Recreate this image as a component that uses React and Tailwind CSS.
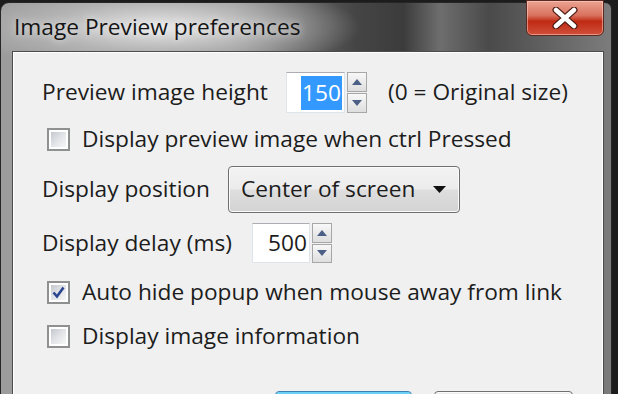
import React from 'react';

const font = { fontFamily: '"Open Sans", "Noto Sans", sans-serif' };

const Arrow = ({up}) => (
    <svg width="10" height="6" viewBox="0 0 10 6">
        {up
            ? <path d="M0 6 L5 0 L10 6 Z" fill="#4c5f86"/>
            : <path d="M0 0 L5 6 L10 0 Z" fill="#4c5f86"/>}
    </svg>
);

const SpinBox = ({value, selected, inputW, h}) => (
    <div className="flex items-stretch gap-[2px]" style={{height: h}}>
        <div
            className="bg-white border border-[#dfe3ea] border-t-[#abadb3] flex items-center justify-end pr-[2px]"
            style={{width: inputW}}>
            {selected
                ? <span className="bg-[#3399ff] text-white px-[1px] leading-[34px]">{value}</span>
                : <span className="leading-[34px]">{value}</span>}
        </div>
        <div className="w-[20px] flex flex-col gap-[1px]">
            <div className="flex-1 border border-[#a7a7a7] bg-gradient-to-b from-[#f8f8f8] to-[#dedede] flex items-center justify-center">
                <Arrow up/>
            </div>
            <div className="flex-1 border border-[#a7a7a7] bg-gradient-to-b from-[#f8f8f8] to-[#dedede] flex items-center justify-center">
                <Arrow/>
            </div>
        </div>
    </div>
);

const CheckBox = ({checked}) => (
    <div className="w-[23px] h-[23px] border-2 border-[#8f9090] bg-white p-[2px] shrink-0">
        <div className="w-full h-full bg-gradient-to-br from-[#c4c8ce] via-[#e2e4e7] to-[#f7f7f7] flex items-center justify-center">
            {checked &&
                <svg width="13" height="13" viewBox="0 0 13 13">
                    <path d="M1.5 6.5 L5 10.5 L11.5 1.5" fill="none" stroke="#2a4590" strokeWidth="2.6"/>
                </svg>}
        </div>
    </div>
);

export default function App() {
    return (
        <div className="w-[618px] h-[394px] bg-[#1c1c1c] overflow-hidden text-[22.7px] text-[#1c1c1c]" style={font}>
            <div
                className="w-[612px] h-[400px] mt-[2px] rounded-tl-[9px] rounded-tr-[7px] border border-[#262626] flex flex-col bg-[radial-gradient(ellipse_200px_46px_at_160px_24px,rgba(235,235,235,0.95),rgba(200,200,200,0.6)_55%,transparent_100%),linear-gradient(90deg,#9c9c9c_0%,#8c8c8c_38%,#454545_58%,#3c3c3c_66%,#6e6e6e_72%,#4a4a4a_80%,#7c7c7c_100%)]">
                <div className="h-[48px] flex items-start justify-between shrink-0">
                    <div className="pl-[13px] pt-[7px] text-[22.7px] text-[#151515] [text-shadow:0_0_8px_rgba(255,255,255,0.9)]">
                        Image Preview preferences
                    </div>
                    <div className="mr-[7px] -mt-[3px] w-[78px] h-[36px] rounded-b-[6px] border border-[#5a2a22] bg-[linear-gradient(180deg,#eba392_0%,#d9735f_42%,#c02a14_60%,#d0503a_100%)] shadow-[inset_0_0_0_1px_rgba(255,220,210,0.5)] flex items-center justify-center">
                        <svg width="28" height="22" viewBox="0 0 28 22">
                            <path d="M5 3 L23 19 M23 3 L5 19" stroke="#4a1a12" strokeWidth="7" strokeLinecap="round"/>
                            <path d="M5 3 L23 19 M23 3 L5 19" stroke="#ffffff" strokeWidth="4.5" strokeLinecap="round"/>
                        </svg>
                    </div>
                </div>
                <div className="ml-[11px] w-[592px] flex-1 border border-[#4c4c4c] bg-[#f0f0f0] shadow-[inset_0_0_0_1px_#ffffff] flex flex-col pl-[29px] pt-[20px]">
                    <div className="flex items-center h-[41px]">
                        <span className="w-[244px]">Preview image height</span>
                        <SpinBox value="150" selected inputW={59} h={41}/>
                        <span className="ml-[21px]">(0 = Original size)</span>
                    </div>
                    <div className="flex items-center mt-[14px] h-[24px] pl-[5px] gap-[12px]">
                        <CheckBox/>
                        <span>Display preview image when ctrl Pressed</span>
                    </div>
                    <div className="flex items-center mt-[15px] h-[47px]">
                        <span className="w-[186px]">Display position</span>
                        <div className="w-[232px] h-[47px] rounded-[4px] border border-[#707070] shadow-[inset_0_0_0_1px_#fafafa] bg-[linear-gradient(180deg,#f3f3f3_0%,#ececec_48%,#dedede_52%,#d3d3d3_100%)] flex items-center justify-between pl-[12px] pr-[13px]">
                            <span>Center of screen</span>
                            <svg width="13" height="7" viewBox="0 0 13 7">
                                <path d="M0 0 L13 0 L6.5 7 Z" fill="#111"/>
                            </svg>
                        </div>
                    </div>
                    <div className="flex items-center mt-[10px] h-[40px]">
                        <span className="w-[210px]">Display delay (ms)</span>
                        <SpinBox value="500" inputW={58} h={40}/>
                    </div>
                    <div className="flex items-center mt-[17px] h-[24px] pl-[5px] gap-[12px]">
                        <CheckBox checked/>
                        <span>Auto hide popup when mouse away from link</span>
                    </div>
                    <div className="flex items-center mt-[20px] h-[24px] pl-[5px] gap-[12px]">
                        <CheckBox/>
                        <span>Display image information</span>
                    </div>
                    <div className="flex mt-[43px] pl-[233px] gap-[22px]">
                        <div className="w-[137px] h-[40px] rounded-[4px] border border-[#3c7fb1] shadow-[inset_0_0_0_2px_#6ad0f5] bg-[#e6f4fb]"/>
                        <div className="w-[139px] h-[40px] rounded-[4px] border border-[#707070] shadow-[inset_0_0_0_1px_#fafafa] bg-[#ececec]"/>
                    </div>
                </div>
            </div>
        </div>
    );
}
